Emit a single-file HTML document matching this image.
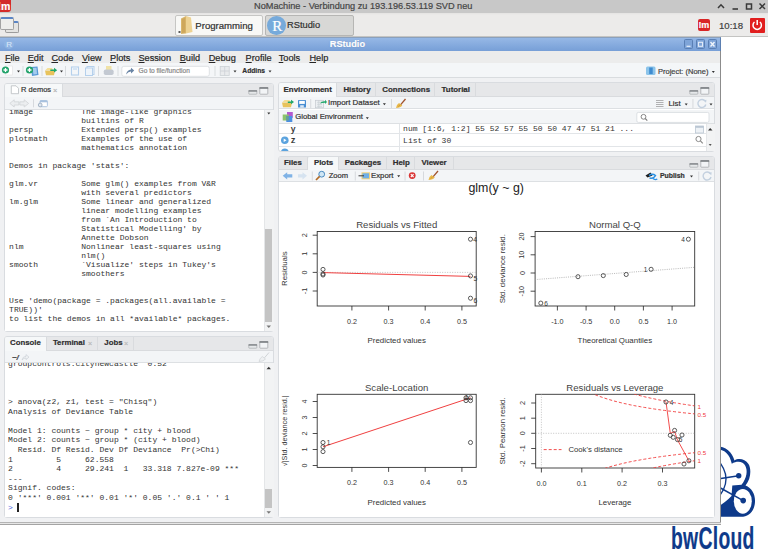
<!DOCTYPE html>
<html><head><meta charset="utf-8">
<style>
*{margin:0;padding:0;box-sizing:border-box}
html,body{width:768px;height:556px;overflow:hidden;background:#fff;font-family:"Liberation Sans",sans-serif}
body{position:relative}
div,svg{position:absolute}
.t{white-space:nowrap;line-height:1;-webkit-text-stroke:0.2px currentColor}
pre{position:absolute;font-family:"Liberation Mono",monospace;white-space:pre;color:#333}
</style></head><body>
<div style="left:0px;top:0px;width:768px;height:13.4px;background:#c8c8c8;"></div>
<div style="left:-3px;top:-1px;width:14px;height:13px;background:#d32a2a;border-radius:0 0 3px 0"></div>
<div class="t" style="left:-2.50px;top:1.18px;font-size:10.5px;color:#fff;font-weight:bold;font-family:'Liberation Sans',sans-serif;">!m</div>
<div class="t" style="left:254.00px;top:1.68px;font-size:9.2px;color:#454545;font-weight:normal;font-family:'Liberation Sans',sans-serif;">NoMachine - Verbindung zu 193.196.53.119 SVD neu</div>
<svg style="left:716px;top:0px;" width="52" height="13" viewBox="716 0 52 13"><path d="M718 8 L721 4.8 L724 8" fill="none" stroke="#3a3a3a" stroke-width="1.5"/>
<path d="M732.5 9 H738" stroke="#3a3a3a" stroke-width="1.6"/>
<rect x="746.5" y="4" width="5" height="5" fill="none" stroke="#3a3a3a" stroke-width="1.5"/>
<path d="M759.5 3.5 L765 9 M765 3.5 L759.5 9" stroke="#3a3a3a" stroke-width="1.5"/></svg>
<div style="left:0px;top:13.4px;width:768px;height:23.6px;background:linear-gradient(#e4e3e2,#ecebea 2px,#ecebea);"></div>
<div style="left:0px;top:36px;width:768px;height:1px;background:#c4c4c2;"></div>
<div style="left:4.5px;top:21px;width:14px;height:12px;background:#e4e4e2;border:1px solid #9c9c9c;border-top:2.5px solid #5a85c5;border-radius:2px"></div>
<div style="left:0px;top:17px;width:14px;height:13px;background:#ededeb;border:1px solid #a2a2a2;border-top:2.5px solid #5a85c5;border-radius:2px"></div>
<div style="left:174.5px;top:14.8px;width:88px;height:20.8px;background:#f8f8f6;border:1px solid #c6c6c4;border-radius:2px"></div>
<svg style="left:176px;top:15px;" width="20" height="20" viewBox="176 15 20 20"><path d="M181 18.5 L186 16 L186 33.5 L181 34 Z" fill="#d9b66c"/>
<path d="M186 16 L191 17.5 L192.5 32 L186 33.5 Z" fill="#edd293"/>
<path d="M182 19 L185.2 17.8 L185.2 32.5 L182 33Z" fill="#c49a4e" opacity=".55"/>
<rect x="178.5" y="31" width="2" height="2" fill="#5a5a5a"/></svg>
<div class="t" style="left:195.30px;top:20.84px;font-size:9.6px;color:#303030;font-weight:normal;font-family:'Liberation Sans',sans-serif;">Programming</div>
<div style="left:265.2px;top:14.8px;width:88.5px;height:20.8px;background:#d8d8d6;border:1px solid #b6b6b4;border-radius:2px"></div>
<div style="left:266.9px;top:16.4px;width:18.7px;height:18.7px;border-radius:50%;background:#76aadb"></div>
<div class="t" style="left:272.20px;top:18.75px;font-size:15px;color:#ffffff;font-weight:normal;font-family:'Liberation Serif',serif;">R</div>
<div class="t" style="left:287.00px;top:21.09px;font-size:9.3px;color:#303030;font-weight:normal;font-family:'Liberation Sans',sans-serif;">RStudio</div>
<div style="left:698px;top:19px;width:12px;height:12px;background:#d92626;border-radius:2px"></div>
<div class="t" style="left:698.60px;top:21.25px;font-size:9px;color:#fff;font-weight:bold;font-family:'Liberation Sans',sans-serif;letter-spacing:-0.3px">!m</div>
<div class="t" style="left:719.00px;top:21.14px;font-size:9.6px;color:#404040;font-weight:normal;font-family:'Liberation Sans',sans-serif;">10:18</div>
<div style="left:749.5px;top:17.5px;width:15.5px;height:15px;background:#e11e1e;border-radius:1px"></div>
<svg style="left:749px;top:17px;" width="17" height="16" viewBox="749 17 17 16"><path d="M754.5 22 A4.2 4.2 0 1 0 759.9 22" fill="none" stroke="#fff" stroke-width="1.5"/>
<path d="M757.2 20 V25" stroke="#fff" stroke-width="1.5"/></svg>
<svg style="left:700px;top:440px;" width="68" height="80" viewBox="700 440 68 80">
<path d="M716 446.3 C726 446.5 732 452 734.5 460.5 C738 458 745 458.5 748.5 464 C751.5 469 751 479 745.5 485.5 C752 488 755.5 495 755 502 C754.5 511 749 516.8 741 516.8 L716 516.8 Z" fill="#0e3a8a"/>
<path d="M716 449.3 C725 449.5 729.5 454 731.8 463.7 C737 460.8 743 461.2 745.3 465.8 C747.8 470.5 747 478 741.5 484.8 L732.3 485.5 L731.5 496 Q726 502 716 508 Z" fill="#fff"/>
<ellipse cx="742.8" cy="501.3" rx="9" ry="12.4" fill="#fff"/>
<path d="M716 458 Q736 479 716 500" fill="none" stroke="#0e3a8a" stroke-width="1.3"/>
<path d="M716 479.3 L738.7 475.8 M716 485.5 L743.2 500.6" stroke="#0e3a8a" stroke-width="1.5"/>
<circle cx="738.7" cy="475.8" r="2.7" fill="#0e3a8a"/><circle cx="743.2" cy="500.6" r="2.8" fill="#0e3a8a"/>
</svg>
<div class="t" style="left:671.30px;top:523.92px;font-size:30.8px;color:#0e3a8a;font-weight:bold;font-family:'Liberation Sans',sans-serif;transform:scaleX(0.627);transform-origin:0 0;letter-spacing:0.5px">bwCloud</div>
<div style="left:0px;top:37px;width:721px;height:488px;background:#f0f1f3;border-right:1px solid #8c8c8c"></div>
<div style="left:0px;top:37px;width:721px;height:14px;background:linear-gradient(#96b8e6,#779fd7);border-top:1px solid #8aa0bd;border-right:1px solid #5b7fb1"></div>
<div style="left:3.5px;top:39px;width:10px;height:10px;border-radius:50%;background:#8fb3e2"></div>
<div class="t" style="left:6.30px;top:41.30px;font-size:8px;color:#d5e4f7;font-weight:normal;font-family:'Liberation Sans',sans-serif;">R</div>
<div class="t" style="left:329.80px;top:39.88px;font-size:9.2px;color:#ffffff;font-weight:bold;font-family:'Liberation Sans',sans-serif;text-shadow:0 0 1px rgba(60,90,140,.5)">RStudio</div>
<div style="left:683.5px;top:39.4px;width:9.8px;height:9.4px;background:#7ea4d8;border:1px solid #5a7fb4;border-radius:1.5px"></div>
<div style="left:695.6px;top:39.4px;width:9.8px;height:9.4px;background:#7ea4d8;border:1px solid #5a7fb4;border-radius:1.5px"></div>
<div style="left:707.6px;top:39.4px;width:9.8px;height:9.4px;background:#7ea4d8;border:1px solid #5a7fb4;border-radius:1.5px"></div>
<svg style="left:683px;top:39px;" width="36" height="11" viewBox="683 39 36 11"><path d="M686.5 46.3 H690.5" stroke="#e2ebf7" stroke-width="1.3"/>
<rect x="698.5" y="42.3" width="4" height="4" fill="none" stroke="#e2ebf7" stroke-width="1.1"/>
<path d="M710.5 42 L714.5 46.5 M714.5 42 L710.5 46.5" stroke="#f0f5fb" stroke-width="1.4"/></svg>
<div style="left:0px;top:51px;width:720px;height:12px;background:#ececec;"></div>
<div class="t" style="left:4.90px;top:53.58px;font-size:9.2px;color:#262626;font-weight:normal;font-family:'Liberation Sans',sans-serif;"><span style="text-decoration:underline;text-underline-offset:1.3px">F</span>ile</div>
<div class="t" style="left:27.70px;top:53.58px;font-size:9.2px;color:#262626;font-weight:normal;font-family:'Liberation Sans',sans-serif;"><span style="text-decoration:underline;text-underline-offset:1.3px">E</span>dit</div>
<div class="t" style="left:51.40px;top:53.58px;font-size:9.2px;color:#262626;font-weight:normal;font-family:'Liberation Sans',sans-serif;"><span style="text-decoration:underline;text-underline-offset:1.3px">C</span>ode</div>
<div class="t" style="left:81.90px;top:53.58px;font-size:9.2px;color:#262626;font-weight:normal;font-family:'Liberation Sans',sans-serif;"><span style="text-decoration:underline;text-underline-offset:1.3px">V</span>iew</div>
<div class="t" style="left:110.00px;top:53.58px;font-size:9.2px;color:#262626;font-weight:normal;font-family:'Liberation Sans',sans-serif;"><span style="text-decoration:underline;text-underline-offset:1.3px">P</span>lots</div>
<div class="t" style="left:138.40px;top:53.58px;font-size:9.2px;color:#262626;font-weight:normal;font-family:'Liberation Sans',sans-serif;"><span style="text-decoration:underline;text-underline-offset:1.3px">S</span>ession</div>
<div class="t" style="left:179.70px;top:53.58px;font-size:9.2px;color:#262626;font-weight:normal;font-family:'Liberation Sans',sans-serif;"><span style="text-decoration:underline;text-underline-offset:1.3px">B</span>uild</div>
<div class="t" style="left:208.70px;top:53.58px;font-size:9.2px;color:#262626;font-weight:normal;font-family:'Liberation Sans',sans-serif;"><span style="text-decoration:underline;text-underline-offset:1.3px">D</span>ebug</div>
<div class="t" style="left:245.60px;top:53.58px;font-size:9.2px;color:#262626;font-weight:normal;font-family:'Liberation Sans',sans-serif;"><span style="text-decoration:underline;text-underline-offset:1.3px">P</span>rofile</div>
<div class="t" style="left:278.70px;top:53.58px;font-size:9.2px;color:#262626;font-weight:normal;font-family:'Liberation Sans',sans-serif;"><span style="text-decoration:underline;text-underline-offset:1.3px">T</span>ools</div>
<div class="t" style="left:309.40px;top:53.58px;font-size:9.2px;color:#262626;font-weight:normal;font-family:'Liberation Sans',sans-serif;"><span style="text-decoration:underline;text-underline-offset:1.3px">H</span>elp</div>
<div style="left:0px;top:63px;width:720px;height:15px;background:#f4f6f8;border-bottom:1px solid #d9dcdf"></div>
<svg style="left:0px;top:63px;" width="720" height="15" viewBox="0 63 720 15">
 <rect x="5.5" y="66" width="7" height="9" fill="#fff" stroke="#e2e2e2" stroke-width=".6"/>
 <circle cx="5.5" cy="70" r="3.6" fill="#22a36b"/>
 <path d="M5.5 68 V72 M3.5 70 H7.5" stroke="#fff" stroke-width="1.3"/>
 <path d="M17 70.5 L20 70.5 L18.5 72.5 Z" fill="#333"/>
 <rect x="22.5" y="66" width="1" height="10" fill="#d8dbde"/>
 <path d="M31 67 L37.5 66.5 L38.5 75 L32 76 Z" fill="#5a9ad6"/>
 <path d="M32.5 68 L36.5 67.8 L37 74 L33.5 74.5 Z" fill="#a5cbee"/>
 <circle cx="29.5" cy="70" r="3.6" fill="#22a36b"/>
 <path d="M29.5 68 V72 M27.5 70 H31.5" stroke="#fff" stroke-width="1.3"/>
 <rect x="41.5" y="66" width="1" height="10" fill="#d8dbde"/>
 <path d="M45.5 70 L47.5 68 L52 68 L53 70 Z" fill="#f3de95"/>
 <path d="M45 70.5 H55 L54 75.3 H46 Z" fill="#e8c35c"/>
 <path d="M50.3 69.6 L54 69.6 L54 67.8 L57.2 70.2 L54 72.5 L54 71 L50.3 71Z" fill="#22a86b"/>
 <path d="M60 70.5 L63 70.5 L61.5 72.5 Z" fill="#333"/>
 <rect x="65" y="66" width="1" height="10" fill="#d8dbde"/>
 <rect x="71.5" y="67" width="7" height="8" fill="none" stroke="#b5d0ec" stroke-width="1.1"/>
 <rect x="73" y="67" width="4" height="3" fill="#d5e5f5"/>
 <rect x="87" y="66.5" width="7" height="8" fill="none" stroke="#b5d0ec" stroke-width="1"/>
 <rect x="85.5" y="68" width="7" height="7.5" fill="#eef4fa" stroke="#b5d0ec" stroke-width="1"/>
 <rect x="98" y="66" width="1" height="10" fill="#d8dbde"/>
 <rect x="106" y="66" width="5.5" height="4" fill="#f0e2a6"/>
 <rect x="103.8" y="69.5" width="9.8" height="5.5" rx="1.8" fill="#c3c9d2"/>
 <rect x="117.5" y="66" width="1" height="10" fill="#d8dbde"/>
 <rect x="121.8" y="66.3" width="87.5" height="10" rx="2" fill="#fff" stroke="#dee1e4" stroke-width="1"/>
 <path d="M126 74.5 Q127 70 131 69.5 L131 67.8 L134.2 70.6 L131 73.4 L131 71.6 Q128.3 71.6 126 74.5Z" fill="#6a85a5"/>
 <rect x="214.5" y="66" width="1" height="10" fill="#d8dbde"/>
 <rect x="220.2" y="66.5" width="9" height="9" fill="#e9ebed" stroke="#cdd1d5" stroke-width=".8"/>
 <path d="M224.7 66.5 V75.5 M220.2 71 H229.2" stroke="#cdd1d5" stroke-width=".8"/>
 <path d="M233.5 70.5 L236.5 70.5 L235 72.5 Z" fill="#333"/>
 <path d="M268.5 70.5 L271.5 70.5 L270 72.5 Z" fill="#333"/>
 <rect x="646" y="66.5" width="9.5" height="8.5" rx="1.5" fill="#8cc4ea"/>
 <rect x="649.2" y="67.5" width="3.5" height="6.5" fill="#3d8bd0"/>
 <path d="M711.8 71 L714.8 71 L713.3 73 Z" fill="#333"/></svg>
<div class="t" style="left:138.50px;top:68.49px;font-size:6.6px;color:#8a8a8a;font-weight:normal;font-family:'Liberation Sans',sans-serif;">Go to file/function</div>
<div class="t" style="left:242.30px;top:68.41px;font-size:6.7px;color:#303030;font-weight:bold;font-family:'Liberation Sans',sans-serif;">Addins</div>
<div class="t" style="left:658.00px;top:67.52px;font-size:7.5px;color:#444;font-weight:normal;font-family:'Liberation Sans',sans-serif;">Project: (None)</div>
<div style="left:4px;top:82.5px;width:270px;height:249.5px;background:#fff;border:1px solid #d9dce0;border-radius:3px"></div>
<div style="left:5px;top:83.5px;width:268px;height:13.5px;background:#e6e7e9;border-bottom:1px solid #d9dbde;border-radius:2px 2px 0 0"></div>
<div style="left:5px;top:83.5px;width:58px;height:13.5px;background:#f6f8f9;border-right:1px solid #d9dbde;border-radius:2px 0 0 0"></div>
<svg style="left:9px;top:84px;" width="12" height="12" viewBox="9 84 12 12"><path d="M11.3 85.8 H16 L18.5 88.3 V93.7 H11.3Z" fill="#fff" stroke="#b8bbbf" stroke-width=".8"/></svg>
<div class="t" style="left:21.10px;top:85.82px;font-size:7.5px;color:#333;font-weight:normal;font-family:'Liberation Sans',sans-serif;">R demos</div>
<div class="t" style="left:53.00px;top:86.52px;font-size:7.5px;color:#b3b3b3;font-weight:normal;font-family:'Liberation Sans',sans-serif;">×</div>
<svg style="left:247.5px;top:87px;" width="21" height="9" viewBox="247.5 87 21 9"><rect x="248.3" y="90.8" width="8" height="3.4" rx=".6" fill="#e6e8ea" stroke="#9da1a5" stroke-width=".6"/>
<rect x="248.0" y="90.3" width="8.6" height="1.3" fill="#7a7e82"/>
<rect x="259.3" y="87.6" width="8" height="6.6" rx=".6" fill="#f2f4f6" stroke="#9da1a5" stroke-width=".7"/>
<rect x="258.9" y="87.2" width="8.8" height="1.6" fill="#7a7e82"/></svg>
<div style="left:5px;top:96.7px;width:268px;height:13.5px;background:#f3f5f7;border-bottom:1px solid #dde0e3"></div>
<svg style="left:5px;top:98px;" width="46" height="10" viewBox="5 98 46 10"><path d="M9.8 103.4 L14.2 99.8 V101.8 H18.8 V105 H14.2 V107Z" fill="#eceef0" stroke="#d0d3d6" stroke-width=".8"/>
<path d="M28.6 103.4 L24.2 99.8 V101.8 H19.8 V105 H24.2 V107Z" fill="#eceef0" stroke="#d0d3d6" stroke-width=".8"/>
<rect x="33" y="99.3" width=".9" height="8" fill="#d3d6da"/>
<rect x="40" y="100.5" width="7.4" height="6.2" rx="1" fill="#fff" stroke="#a8c1de" stroke-width=".9"/>
<rect x="40" y="100.5" width="7.4" height="1.8" fill="#a8c1de"/>
<circle cx="40.2" cy="105" r="1.9" fill="#dfe6ee" stroke="#8a9db3" stroke-width=".7"/></svg>
<div style="left:5px;top:110.2px;width:259px;height:221px;overflow:hidden;background:#fff">
<pre style="left:4.1px;top:-3.6px;font-size:8.03px;line-height:9.03px">image          The image-like graphics
               builtins of R
persp          Extended persp() examples
plotmath       Examples of the use of
               mathematics annotation

Demos in package 'stats':

glm.vr         Some glm() examples from V&amp;R
               with several predictors
lm.glm         Some linear and generalized
               linear modelling examples
               from `An Introduction to
               Statistical Modelling' by
               Annette Dobson
nlm            Nonlinear least-squares using
               nlm()
smooth         `Visualize' steps in Tukey's
               smoothers


Use 'demo(package = .packages(all.available =
TRUE))'
to list the demos in all *available* packages.</pre></div>
<div style="left:264.1px;top:110.2px;width:9.5px;height:221px;background:#f2f3f4;border-left:1px solid #e4e6e8"></div>
<div style="left:265.3px;top:229px;width:6.4px;height:93px;background:#c4c4c4;"></div>
<svg style="left:264px;top:110px;" width="10" height="7" viewBox="264 110 10 7"><path d="M267.3 112.5 L270.3 112.5 L268.8 114.5Z" fill="#333"/></svg>
<svg style="left:264px;top:318px;" width="10" height="12" viewBox="264 318 10 12"><path d="M266.5 325.5 L271 325.5 L268.8 328Z" fill="#777"/></svg>
<div style="left:4px;top:336.4px;width:270px;height:181.60000000000002px;background:#fff;border:1px solid #d9dce0;border-radius:3px"></div>
<div style="left:5px;top:337.4px;width:268px;height:13.200000000000045px;background:#e6e7e9;border-bottom:1px solid #d9dbde;border-radius:2px 2px 0 0"></div>
<div style="left:5px;top:337.4px;width:41.5px;height:13.200000000000045px;background:#f6f8f9;border-right:1px solid #d9dbde;border-radius:2px 0 0 0"></div>
<div style="left:46.5px;top:337.4px;width:51.900000000000006px;height:12.200000000000045px;background:#e6e7e9;border-right:1px solid #d9dbde;border-radius:2px 0 0 0"></div>
<div style="left:98.4px;top:337.4px;width:35.599999999999994px;height:12.200000000000045px;background:#e6e7e9;border-right:1px solid #d9dbde;border-radius:2px 0 0 0"></div>
<div class="t" style="left:10.00px;top:339.37px;font-size:7.8px;color:#2e2e2e;font-weight:bold;font-family:'Liberation Sans',sans-serif;">Console</div>
<div class="t" style="left:52.90px;top:339.37px;font-size:7.8px;color:#2e2e2e;font-weight:bold;font-family:'Liberation Sans',sans-serif;">Terminal</div>
<div class="t" style="left:88.00px;top:340.20px;font-size:7.3px;color:#b8b8b8;font-weight:normal;font-family:'Liberation Sans',sans-serif;">×</div>
<div class="t" style="left:104.30px;top:339.37px;font-size:7.8px;color:#2e2e2e;font-weight:bold;font-family:'Liberation Sans',sans-serif;">Jobs</div>
<div class="t" style="left:124.00px;top:340.20px;font-size:7.3px;color:#b8b8b8;font-weight:normal;font-family:'Liberation Sans',sans-serif;">×</div>
<svg style="left:247.5px;top:340.5px;" width="21" height="9" viewBox="247.5 340.5 21 9"><rect x="248.3" y="344.3" width="8" height="3.4" rx=".6" fill="#e6e8ea" stroke="#9da1a5" stroke-width=".6"/>
<rect x="248.0" y="343.8" width="8.6" height="1.3" fill="#7a7e82"/>
<rect x="259.3" y="341.1" width="8" height="6.6" rx=".6" fill="#f2f4f6" stroke="#9da1a5" stroke-width=".7"/>
<rect x="258.9" y="340.7" width="8.8" height="1.6" fill="#7a7e82"/></svg>
<div style="left:5px;top:350.6px;width:268px;height:12.199999999999989px;background:#f3f5f7;border-bottom:1px solid #dde0e3"></div>
<div class="t" style="left:12.00px;top:353.77px;font-size:7.8px;color:#444;font-weight:bold;font-family:'Liberation Sans',sans-serif;font-style:italic">~/</div>
<svg style="left:21px;top:352px;" width="9" height="9" viewBox="21 352 9 9"><path d="M22 360 Q22.6 356.5 26 356.3 V354.6 L29 357.1 L26 359.6 V358 Q23.6 358 22 360Z" fill="#f0f2f4" stroke="#cbd1d7" stroke-width=".7"/></svg>
<svg style="left:256px;top:352px;" width="14" height="11" viewBox="256 352 14 11"><path d="M269 352.5 L264.5 357.8" stroke="#cfd3d6" stroke-width="1"/><path d="M259 361.5 Q259.8 358 262.3 356.5 L265.5 359 Q263.5 361.5 259 361.5Z" fill="#eef0f2" stroke="#cfd3d6" stroke-width=".7"/></svg>
<div style="left:5px;top:363.3px;width:259px;height:154px;overflow:hidden;background:#fff">
<pre style="left:3.1px;top:-4.6px;font-size:8.03px;line-height:9.6px">groupcontrols:citynewcastle  0.52



&gt; anova(z2, z1, test = "Chisq")
Analysis of Deviance Table

Model 1: counts ~ group * city + blood
Model 2: counts ~ group * (city + blood)
  Resid. Df Resid. Dev Df Deviance  Pr(&gt;Chi)
1         5     62.558
2         4     29.241  1   33.318 7.827e-09 ***
---
Signif. codes:
0 '***' 0.001 '**' 0.01 '*' 0.05 '.' 0.1 ' ' 1
<span style="color:#4b5fe0">&gt;</span></pre>
<div style="left:12.4px;top:139.7px;width:1.5px;height:9.5px;background:#222"></div></div>
<div style="left:264.1px;top:362.8px;width:9.5px;height:154.5px;background:#f2f3f4;border-left:1px solid #e4e6e8"></div>
<div style="left:265.3px;top:489px;width:6.4px;height:19.2px;background:#c4c4c4;"></div>
<svg style="left:264px;top:364px;" width="10" height="8" viewBox="264 364 10 8"><path d="M266.5 369.3 L271 369.3 L268.8 366.8Z" fill="#333"/></svg>
<svg style="left:264px;top:509px;" width="10" height="8" viewBox="264 509 10 8"><path d="M266.5 511.2 L271 511.2 L268.8 513.7Z" fill="#777"/></svg>
<div style="left:277.5px;top:82.1px;width:437.1px;height:69.5px;background:#fff;border:1px solid #d9dce0;border-radius:3px"></div>
<div style="left:278.5px;top:83.1px;width:435.1px;height:13.600000000000009px;background:#e6e7e9;border-bottom:1px solid #d9dbde;border-radius:2px 2px 0 0"></div>
<div style="left:278.5px;top:83.1px;width:58.69999999999999px;height:13.600000000000009px;background:#f6f8f9;border-right:1px solid #d9dbde;border-radius:2px 0 0 0"></div>
<div style="left:337.2px;top:83.1px;width:39.10000000000002px;height:12.600000000000009px;background:#e6e7e9;border-right:1px solid #d9dbde;border-radius:2px 0 0 0"></div>
<div style="left:376.3px;top:83.1px;width:58.39999999999998px;height:12.600000000000009px;background:#e6e7e9;border-right:1px solid #d9dbde;border-radius:2px 0 0 0"></div>
<div style="left:434.7px;top:83.1px;width:41.30000000000001px;height:12.600000000000009px;background:#e6e7e9;border-right:1px solid #d9dbde;border-radius:2px 0 0 0"></div>
<div class="t" style="left:283.60px;top:85.78px;font-size:7.9px;color:#2e2e2e;font-weight:bold;font-family:'Liberation Sans',sans-serif;">Environment</div>
<div class="t" style="left:343.40px;top:85.78px;font-size:7.9px;color:#2e2e2e;font-weight:bold;font-family:'Liberation Sans',sans-serif;">History</div>
<div class="t" style="left:382.30px;top:85.78px;font-size:7.9px;color:#2e2e2e;font-weight:bold;font-family:'Liberation Sans',sans-serif;">Connections</div>
<div class="t" style="left:441.60px;top:85.78px;font-size:7.9px;color:#2e2e2e;font-weight:bold;font-family:'Liberation Sans',sans-serif;">Tutorial</div>
<svg style="left:689px;top:87px;" width="21" height="9" viewBox="689 87 21 9"><rect x="689.8" y="90.8" width="8" height="3.4" rx=".6" fill="#e6e8ea" stroke="#9da1a5" stroke-width=".6"/>
<rect x="689.5" y="90.3" width="8.6" height="1.3" fill="#7a7e82"/>
<rect x="700.8" y="87.6" width="8" height="6.6" rx=".6" fill="#f2f4f6" stroke="#9da1a5" stroke-width=".7"/>
<rect x="700.4" y="87.2" width="8.8" height="1.6" fill="#7a7e82"/></svg>
<div style="left:278.5px;top:96.7px;width:435.1px;height:12.799999999999997px;background:#f3f5f7;border-bottom:1px solid #dde0e3"></div>
<div style="left:278.5px;top:109.5px;width:435.1px;height:14.799999999999997px;background:#f3f5f7;border-bottom:1px solid #dde0e3"></div>
<div style="left:278.5px;top:124.3px;width:428px;height:9.9px;background:#fff;border-bottom:1px solid #e2e5e8"></div>
<div style="left:278.5px;top:134.2px;width:428px;height:13.1px;background:#fff;border-bottom:1px solid #e2e5e8"></div>
<div style="left:399.4px;top:124.3px;width:1px;height:26.5px;background:#e2e5e8;"></div>
<svg style="left:277px;top:96px;" width="438" height="56" viewBox="277 96 438 56">
 <path d="M282.5 102 L284.5 100 L289.5 100 L290.5 102 Z" fill="#f3de95"/><path d="M282 102.5 H292 L291 107.3 H283 Z" fill="#e8c35c"/><path d="M287.8 101.6 L291 101.6 L291 99.8 L294 102 L291 104.2 L291 103 L287.8 103Z" fill="#22a86b"/>
 <rect x="298" y="100" width="8" height="7.6" rx=".6" fill="#4a8fd3"/><rect x="299.2" y="100.9" width="5.6" height="3" fill="#fff"/><rect x="300.2" y="105.2" width="3.6" height="2.4" fill="#dbe8f5"/>
 <rect x="310.3" y="99" width=".9" height="9" fill="#d3d6da"/>
 <rect x="315.5" y="100.3" width="8" height="7.5" fill="#edf0f3" stroke="#c3c9cf" stroke-width=".7"/><path d="M317 102.3 H322 M317 104.3 H322 M317 106.3 H322 M318.8 100.3 V107.8" stroke="#c3c9cf" stroke-width=".6"/><path d="M320 103.5 Q321 101 325 101.2 V99.8 L327 101.9 L325 104 V102.8 Q322 102.8 320 103.5Z" fill="#22a86b"/>
 <rect x="391" y="99" width=".9" height="9" fill="#d3d6da"/>
 <path d="M405.5 99 L400.5 104.8" stroke="#a0522d" stroke-width="1.3"/><path d="M396 108 Q396.5 104.5 399 103 L402.3 105.6 Q400.5 108 396 108Z" fill="#e8b84a"/><path d="M398.2 106.8 L400.2 104.6" stroke="#c48a2a" stroke-width=".6"/>
 <rect x="287" y="112" width="5.8" height="5.8" fill="#b259cf"/><rect x="282.7" y="114.5" width="6" height="6" fill="#8cc36c"/><rect x="286.3" y="116" width="6" height="6" fill="#4a8fe2"/><rect x="286.3" y="116" width="2.4" height="4.5" fill="#6aa090"/>
 <path d="M656 100.5 H663.5 M656 102.5 H663.5 M656 104.5 H663.5 M656 106.5 H663.5" stroke="#a0a0a0" stroke-width=".8"/>
 <rect x="692.5" y="99" width=".9" height="9" fill="#d3d6da"/>
 <path d="M705.2 101.2 A4 4 0 1 0 705.8 104.5" fill="none" stroke="#c3d0df" stroke-width="1.4"/><path d="M703.5 100.3 L706.5 99.8 L706 102.8Z" fill="#c3d0df"/>
 <rect x="636.8" y="112.4" width="72.2" height="10" rx="1.5" fill="#fff" stroke="#dce0e4" stroke-width="1"/>
 <circle cx="643.5" cy="116.8" r="2.4" fill="none" stroke="#7a7a7a" stroke-width=".9"/><path d="M645.2 118.5 L647.3 120.6" stroke="#7a7a7a" stroke-width="1.1"/>
 <circle cx="284.8" cy="140.3" r="3.8" fill="#5ba3de"/><path d="M283.7 138.5 L286.5 140.3 L283.7 142.1Z" fill="#fff"/>
 <rect x="695.5" y="126" width="8" height="7" fill="#eef2f6" stroke="#bac6d3" stroke-width=".8"/><rect x="695.5" y="126" width="8" height="1.8" fill="#bac6d3"/>
 <circle cx="698.5" cy="139" r="2.6" fill="none" stroke="#8a8a8a" stroke-width="1"/><path d="M700.4 140.9 L702.8 143.3" stroke="#8a8a8a" stroke-width="1.2"/>
</svg>
<svg style="left:280px;top:147px;" width="10" height="3.8" viewBox="280 147 10 3.8"><circle cx="284.8" cy="152.2" r="3.8" fill="#5ba3de"/></svg>
<div style="left:706px;top:124.3px;width:8.6px;height:26.5px;background:#f2f3f4;border-left:1px solid #e4e6e8"></div>
<svg style="left:706px;top:124px;" width="9" height="27" viewBox="706 124 9 27"><path d="M708 130.5 L712.5 130.5 L710.2 128Z" fill="#333"/><path d="M708.7 144 L711.7 144 L710.2 146Z" fill="#555"/></svg>
<div class="t" style="left:328.00px;top:99.38px;font-size:7.9px;color:#333;font-weight:normal;font-family:'Liberation Sans',sans-serif;">Import Dataset</div>
<svg style="left:380px;top:100px" width="10" height="8" viewBox="380 100 10 8"><path d="M382.9 103.2 L385.9 103.2 L384.4 105.2Z" fill="#333"/></svg>
<div class="t" style="left:295.30px;top:112.85px;font-size:7.7px;color:#333;font-weight:normal;font-family:'Liberation Sans',sans-serif;">Global Environment</div>
<svg style="left:362px;top:114px" width="10" height="8" viewBox="362 114 10 8"><path d="M365.8 117.3 L368.8 117.3 L367.3 119.3Z" fill="#333"/></svg>
<div class="t" style="left:668.50px;top:99.57px;font-size:7.8px;color:#333;font-weight:normal;font-family:'Liberation Sans',sans-serif;">List</div>
<svg style="left:680px;top:100px" width="36" height="8" viewBox="680 100 36 8"><path d="M684.7 103.5 L687.7 103.5 L686.2 105.5Z" fill="#333"/><path d="M709.5 103.5 L712.5 103.5 L711 105.5Z" fill="#333"/></svg>
<div class="t" style="left:291.00px;top:125.29px;font-size:8.6px;color:#222;font-weight:normal;font-family:'Liberation Sans',sans-serif;">y</div>
<div class="t" style="left:291.00px;top:136.49px;font-size:8.6px;color:#222;font-weight:normal;font-family:'Liberation Sans',sans-serif;">z</div>
<div style="left:400.5px;top:124.3px;width:305px;height:26.5px;overflow:hidden">
<pre style="left:2.6px;top:-1.2px;font-size:8.03px;line-height:12.2px">num [1:6, 1:2] 55 52 57 55 50 50 47 47 51 21 ...
List of 30</pre></div>
<div style="left:277.5px;top:155.5px;width:437.1px;height:362.5px;background:#fff;border:1px solid #d9dce0;border-radius:3px"></div>
<div style="left:278.5px;top:156.5px;width:435.1px;height:13.099999999999994px;background:#e6e7e9;border-bottom:1px solid #d9dbde;border-radius:2px 2px 0 0"></div>
<div style="left:278.5px;top:156.5px;width:29.80000000000001px;height:12.099999999999994px;background:#e6e7e9;border-right:1px solid #d9dbde;border-radius:2px 0 0 0"></div>
<div style="left:308.3px;top:156.5px;width:30.5px;height:13.099999999999994px;background:#f6f8f9;border-right:1px solid #d9dbde;border-radius:2px 0 0 0"></div>
<div style="left:338.8px;top:156.5px;width:47.89999999999998px;height:12.099999999999994px;background:#e6e7e9;border-right:1px solid #d9dbde;border-radius:2px 0 0 0"></div>
<div style="left:386.7px;top:156.5px;width:28.69999999999999px;height:12.099999999999994px;background:#e6e7e9;border-right:1px solid #d9dbde;border-radius:2px 0 0 0"></div>
<div style="left:415.4px;top:156.5px;width:38.400000000000034px;height:12.099999999999994px;background:#e6e7e9;border-right:1px solid #d9dbde;border-radius:2px 0 0 0"></div>
<div class="t" style="left:283.90px;top:159.19px;font-size:7.9px;color:#2e2e2e;font-weight:bold;font-family:'Liberation Sans',sans-serif;">Files</div>
<div class="t" style="left:313.90px;top:159.19px;font-size:7.9px;color:#2e2e2e;font-weight:bold;font-family:'Liberation Sans',sans-serif;">Plots</div>
<div class="t" style="left:344.80px;top:159.19px;font-size:7.9px;color:#2e2e2e;font-weight:bold;font-family:'Liberation Sans',sans-serif;">Packages</div>
<div class="t" style="left:392.70px;top:159.19px;font-size:7.9px;color:#2e2e2e;font-weight:bold;font-family:'Liberation Sans',sans-serif;">Help</div>
<div class="t" style="left:421.40px;top:159.19px;font-size:7.9px;color:#2e2e2e;font-weight:bold;font-family:'Liberation Sans',sans-serif;">Viewer</div>
<svg style="left:689px;top:160px;" width="21" height="9" viewBox="689 160 21 9"><rect x="689.8" y="163.8" width="8" height="3.4" rx=".6" fill="#e6e8ea" stroke="#9da1a5" stroke-width=".6"/>
<rect x="689.5" y="163.3" width="8.6" height="1.3" fill="#7a7e82"/>
<rect x="700.8" y="160.6" width="8" height="6.6" rx=".6" fill="#f2f4f6" stroke="#9da1a5" stroke-width=".7"/>
<rect x="700.4" y="160.2" width="8.8" height="1.6" fill="#7a7e82"/></svg>
<div style="left:278.5px;top:169.6px;width:435.1px;height:12.700000000000017px;background:#f3f5f7;border-bottom:1px solid #dde0e3"></div>
<svg style="left:277px;top:169px;" width="438" height="14" viewBox="277 169 438 14">
 <path d="M282.7 175.8 L287.2 172.2 V174.2 H292.3 V177.4 H287.2 V179.4Z" fill="#80b3e6"/>
 <path d="M307 175.8 L302.5 172.2 V174.2 H298 V177.4 H302.5 V179.4Z" fill="#d6e3f0"/>
 <rect x="311.8" y="171.5" width=".9" height="9" fill="#d3d6da"/>
 <circle cx="321.7" cy="174.2" r="2.9" fill="#cfe6f5" stroke="#4b8bc0" stroke-width="1"/><path d="M319.6 176.4 L316 180" stroke="#b06a26" stroke-width="1.7"/>
 <rect x="354.8" y="171.5" width=".9" height="9" fill="#d3d6da"/>
 <rect x="361.5" y="172.3" width="8.5" height="7" fill="#efd27c"/><rect x="362.5" y="173.3" width="6.5" height="5" fill="#70b0e6"/><path d="M358.5 175.8 H364" stroke="#3a3a3a" stroke-width="1"/>
 <rect x="404.6" y="171.5" width=".9" height="9" fill="#d3d6da"/>
 <circle cx="412.2" cy="175.6" r="3.4" fill="#d93636"/><path d="M410.8 174.2 L413.6 177 M413.6 174.2 L410.8 177" stroke="#fff" stroke-width="1.1"/>
 <rect x="423" y="171.5" width=".9" height="9" fill="#d3d6da"/>
 <path d="M438 171 L433 176.8" stroke="#a0522d" stroke-width="1.3"/><path d="M428.5 180 Q429 176.5 431.5 175 L434.8 177.6 Q433 180 428.5 180Z" fill="#e8b84a"/><path d="M430.7 178.8 L432.7 176.6" stroke="#c48a2a" stroke-width=".6"/>
 <path d="M645.5 175.5 L650.5 172.5 L652.5 175.5 L647.5 177.5Z" fill="#1e1e1e"/>
 <path d="M649 175.6 Q652.5 173 655.5 175.6 Q653 179.5 649.5 177.8" fill="none" stroke="#2a90e2" stroke-width="1.4"/><path d="M652.5 178.3 Q655 180.5 657.3 179" fill="none" stroke="#2a90e2" stroke-width="1.2"/>
 <rect x="698.3" y="171.5" width=".9" height="9" fill="#d3d6da"/>
 <path d="M710.4 173.7 A4 4 0 1 0 711 177" fill="none" stroke="#c3d0df" stroke-width="1.4"/><path d="M708.7 172.8 L711.7 172.3 L711.2 175.3Z" fill="#c3d0df"/>
<path d="M397.2 175.2 L400.2 175.2 L398.7 177.2Z" fill="#333"/><path d="M690.0 175.5 L693.0 175.5 L691.5 177.5Z" fill="#333"/></svg>
<div class="t" style="left:328.70px;top:172.44px;font-size:7.6px;color:#333;font-weight:normal;font-family:'Liberation Sans',sans-serif;">Zoom</div>
<div class="t" style="left:371.00px;top:172.27px;font-size:7.8px;color:#333;font-weight:normal;font-family:'Liberation Sans',sans-serif;">Export</div>
<div class="t" style="left:659.90px;top:173.03px;font-size:6.9px;color:#333;font-weight:bold;font-family:'Liberation Sans',sans-serif;">Publish</div>
<div style="left:278.5px;top:182.3px;width:435.1px;height:334.7px;background:#fff;"></div>
<svg style="left:278px;top:182px" width="437" height="336" viewBox="278 182 437 336" font-family="Liberation Sans, sans-serif">
<defs><clipPath id="c4"><rect x="535.7" y="394.3" width="159" height="73.7"/></clipPath></defs>
<rect x="317.2" y="231.5" width="159.0" height="74.5" fill="none" stroke="#333" stroke-width="0.9"/>
<text x="396.7" y="227.8" font-size="9.6" text-anchor="middle" fill="#444">Residuals vs Fitted</text>
<line x1="312.7" y1="235.2" x2="317.2" y2="235.2" stroke="#222" stroke-width="0.8"/>
<text x="306.59999999999997" y="235.2" font-size="7.2" text-anchor="middle" fill="#333" transform="rotate(-90 306.59999999999997 235.2)">2</text>
<line x1="312.7" y1="253.8" x2="317.2" y2="253.8" stroke="#222" stroke-width="0.8"/>
<text x="306.59999999999997" y="253.8" font-size="7.2" text-anchor="middle" fill="#333" transform="rotate(-90 306.59999999999997 253.8)">1</text>
<line x1="312.7" y1="272.4" x2="317.2" y2="272.4" stroke="#222" stroke-width="0.8"/>
<text x="306.59999999999997" y="272.4" font-size="7.2" text-anchor="middle" fill="#333" transform="rotate(-90 306.59999999999997 272.4)">0</text>
<line x1="312.7" y1="291.0" x2="317.2" y2="291.0" stroke="#222" stroke-width="0.8"/>
<text x="306.59999999999997" y="291.0" font-size="7.2" text-anchor="middle" fill="#333" transform="rotate(-90 306.59999999999997 291.0)">-1</text>
<line x1="351.9" y1="306" x2="351.9" y2="310.5" stroke="#222" stroke-width="0.8"/>
<text x="351.9" y="323.6" font-size="7.2" text-anchor="middle" fill="#333">0.2</text>
<line x1="388.6" y1="306" x2="388.6" y2="310.5" stroke="#222" stroke-width="0.8"/>
<text x="388.6" y="323.6" font-size="7.2" text-anchor="middle" fill="#333">0.3</text>
<line x1="425.2" y1="306" x2="425.2" y2="310.5" stroke="#222" stroke-width="0.8"/>
<text x="425.2" y="323.6" font-size="7.2" text-anchor="middle" fill="#333">0.4</text>
<line x1="461.9" y1="306" x2="461.9" y2="310.5" stroke="#222" stroke-width="0.8"/>
<text x="461.9" y="323.6" font-size="7.2" text-anchor="middle" fill="#333">0.5</text>
<text x="396.7" y="343.0" font-size="7.9" text-anchor="middle" fill="#333">Predicted values</text>
<text x="287.0" y="268.7" font-size="7.9" text-anchor="middle" fill="#333" transform="rotate(-90 287.0 268.7)">Residuals</text>
<line x1="317.2" y1="272.4" x2="476.2" y2="272.4" stroke="#aaa" stroke-width="0.7" stroke-dasharray="1 1.5"/>
<line x1="323" y1="272.6" x2="470.5" y2="276.4" stroke="#f04040" stroke-width="1.0"/>
<circle cx="323" cy="269.4" r="2.05" fill="none" stroke="#333" stroke-width="0.8"/>
<circle cx="323" cy="274.0" r="2.05" fill="none" stroke="#333" stroke-width="0.8"/>
<circle cx="323" cy="275.0" r="2.05" fill="none" stroke="#333" stroke-width="0.8"/>
<circle cx="470.5" cy="239.2" r="2.05" fill="none" stroke="#333" stroke-width="0.8"/>
<circle cx="470.5" cy="275.9" r="2.05" fill="none" stroke="#333" stroke-width="0.8"/>
<circle cx="470.5" cy="298.2" r="2.05" fill="none" stroke="#333" stroke-width="0.8"/>
<text x="475.2" y="241.6" font-size="6.8" text-anchor="middle" fill="#333">4</text>
<text x="475.5" y="281.0" font-size="6.8" text-anchor="middle" fill="#333">5</text>
<text x="475.5" y="303.3" font-size="6.8" text-anchor="middle" fill="#333">6</text>
<rect x="535.1" y="231.5" width="159.60000000000002" height="74.5" fill="none" stroke="#333" stroke-width="0.9"/>
<text x="614.9" y="227.8" font-size="9.6" text-anchor="middle" fill="#444">Normal Q-Q</text>
<line x1="530.6" y1="236.6" x2="535.1" y2="236.6" stroke="#222" stroke-width="0.8"/>
<text x="524.5" y="236.6" font-size="7.2" text-anchor="middle" fill="#333" transform="rotate(-90 524.5 236.6)">20</text>
<line x1="530.6" y1="254.8" x2="535.1" y2="254.8" stroke="#222" stroke-width="0.8"/>
<text x="524.5" y="254.8" font-size="7.2" text-anchor="middle" fill="#333" transform="rotate(-90 524.5 254.8)">10</text>
<line x1="530.6" y1="273.0" x2="535.1" y2="273.0" stroke="#222" stroke-width="0.8"/>
<text x="524.5" y="273.0" font-size="7.2" text-anchor="middle" fill="#333" transform="rotate(-90 524.5 273.0)">0</text>
<line x1="530.6" y1="291.2" x2="535.1" y2="291.2" stroke="#222" stroke-width="0.8"/>
<text x="524.5" y="291.2" font-size="7.2" text-anchor="middle" fill="#333" transform="rotate(-90 524.5 291.2)">-10</text>
<line x1="557.4" y1="306" x2="557.4" y2="310.5" stroke="#222" stroke-width="0.8"/>
<text x="557.4" y="323.6" font-size="7.2" text-anchor="middle" fill="#333">-1.0</text>
<line x1="586.1" y1="306" x2="586.1" y2="310.5" stroke="#222" stroke-width="0.8"/>
<text x="586.1" y="323.6" font-size="7.2" text-anchor="middle" fill="#333">-0.5</text>
<line x1="614.7" y1="306" x2="614.7" y2="310.5" stroke="#222" stroke-width="0.8"/>
<text x="614.7" y="323.6" font-size="7.2" text-anchor="middle" fill="#333">0.0</text>
<line x1="643.4" y1="306" x2="643.4" y2="310.5" stroke="#222" stroke-width="0.8"/>
<text x="643.4" y="323.6" font-size="7.2" text-anchor="middle" fill="#333">0.5</text>
<line x1="672.1" y1="306" x2="672.1" y2="310.5" stroke="#222" stroke-width="0.8"/>
<text x="672.1" y="323.6" font-size="7.2" text-anchor="middle" fill="#333">1.0</text>
<text x="614.9" y="343.0" font-size="7.9" text-anchor="middle" fill="#333">Theoretical Quantiles</text>
<text x="505.0" y="268.7" font-size="7.9" text-anchor="middle" fill="#333" transform="rotate(-90 505.0 268.7)">Std. deviance resid.</text>
<line x1="535.1" y1="279.6" x2="694.7" y2="267.3" stroke="#999" stroke-width="0.7" stroke-dasharray="1 1.2"/>
<circle cx="540.8" cy="303.1" r="2.05" fill="none" stroke="#333" stroke-width="0.8"/>
<circle cx="578" cy="276.7" r="2.05" fill="none" stroke="#333" stroke-width="0.8"/>
<circle cx="603.3" cy="275.6" r="2.05" fill="none" stroke="#333" stroke-width="0.8"/>
<circle cx="626.2" cy="274.5" r="2.05" fill="none" stroke="#333" stroke-width="0.8"/>
<circle cx="651.1" cy="269.3" r="2.05" fill="none" stroke="#333" stroke-width="0.8"/>
<circle cx="688.4" cy="239.2" r="2.05" fill="none" stroke="#333" stroke-width="0.8"/>
<text x="546.0" y="305.6" font-size="6.5" text-anchor="middle" fill="#333">6</text>
<text x="645.5" y="271.6" font-size="6.5" text-anchor="middle" fill="#333">1</text>
<text x="683.0" y="241.6" font-size="6.5" text-anchor="middle" fill="#333">4</text>
<rect x="317.2" y="394.3" width="159.0" height="73.09999999999997" fill="none" stroke="#333" stroke-width="0.9"/>
<text x="396.7" y="390.6" font-size="9.6" text-anchor="middle" fill="#444">Scale-Location</text>
<line x1="312.7" y1="401.5" x2="317.2" y2="401.5" stroke="#222" stroke-width="0.8"/>
<text x="306.59999999999997" y="401.5" font-size="7.2" text-anchor="middle" fill="#333" transform="rotate(-90 306.59999999999997 401.5)">4</text>
<line x1="312.7" y1="417.5" x2="317.2" y2="417.5" stroke="#222" stroke-width="0.8"/>
<text x="306.59999999999997" y="417.5" font-size="7.2" text-anchor="middle" fill="#333" transform="rotate(-90 306.59999999999997 417.5)">3</text>
<line x1="312.7" y1="433.5" x2="317.2" y2="433.5" stroke="#222" stroke-width="0.8"/>
<text x="306.59999999999997" y="433.5" font-size="7.2" text-anchor="middle" fill="#333" transform="rotate(-90 306.59999999999997 433.5)">2</text>
<line x1="312.7" y1="449.5" x2="317.2" y2="449.5" stroke="#222" stroke-width="0.8"/>
<text x="306.59999999999997" y="449.5" font-size="7.2" text-anchor="middle" fill="#333" transform="rotate(-90 306.59999999999997 449.5)">1</text>
<line x1="312.7" y1="465.5" x2="317.2" y2="465.5" stroke="#222" stroke-width="0.8"/>
<text x="306.59999999999997" y="465.5" font-size="7.2" text-anchor="middle" fill="#333" transform="rotate(-90 306.59999999999997 465.5)">0</text>
<line x1="351.9" y1="467.4" x2="351.9" y2="471.9" stroke="#222" stroke-width="0.8"/>
<text x="351.9" y="485.0" font-size="7.2" text-anchor="middle" fill="#333">0.2</text>
<line x1="388.6" y1="467.4" x2="388.6" y2="471.9" stroke="#222" stroke-width="0.8"/>
<text x="388.6" y="485.0" font-size="7.2" text-anchor="middle" fill="#333">0.3</text>
<line x1="425.2" y1="467.4" x2="425.2" y2="471.9" stroke="#222" stroke-width="0.8"/>
<text x="425.2" y="485.0" font-size="7.2" text-anchor="middle" fill="#333">0.4</text>
<line x1="461.9" y1="467.4" x2="461.9" y2="471.9" stroke="#222" stroke-width="0.8"/>
<text x="461.9" y="485.0" font-size="7.2" text-anchor="middle" fill="#333">0.5</text>
<text x="396.7" y="504.6" font-size="7.9" text-anchor="middle" fill="#333">Predicted values</text>
<text x="287.0" y="430.8" font-size="7.2" text-anchor="middle" fill="#333" transform="rotate(-90 287.0 430.8)">√|Std. deviance resid.|</text>
<line x1="323" y1="446.8" x2="470.5" y2="397.8" stroke="#f04040" stroke-width="1.0"/>
<circle cx="323" cy="442.5" r="2.05" fill="none" stroke="#333" stroke-width="0.8"/>
<circle cx="323" cy="446.8" r="2.05" fill="none" stroke="#333" stroke-width="0.8"/>
<circle cx="323" cy="451.6" r="2.05" fill="none" stroke="#333" stroke-width="0.8"/>
<circle cx="470.5" cy="442.5" r="2.05" fill="none" stroke="#333" stroke-width="0.8"/>
<circle cx="466" cy="397.8" r="2.05" fill="none" stroke="#333" stroke-width="0.8"/>
<circle cx="470.5" cy="397.8" r="2.05" fill="none" stroke="#333" stroke-width="0.8"/>
<circle cx="466" cy="400.6" r="2.05" fill="none" stroke="#333" stroke-width="0.8"/>
<circle cx="470.5" cy="400.6" r="2.05" fill="none" stroke="#333" stroke-width="0.8"/>
<text x="328.5" y="445.0" font-size="6.5" text-anchor="middle" fill="#333">1</text>
<text x="466.0" y="400.3" font-size="6.5" text-anchor="middle" fill="#333">4</text>
<rect x="535.7" y="394.3" width="159.0" height="73.69999999999999" fill="none" stroke="#333" stroke-width="0.9"/>
<text x="614.9" y="390.6" font-size="9.6" text-anchor="middle" fill="#444">Residuals vs Leverage</text>
<line x1="531.2" y1="403.0" x2="535.7" y2="403.0" stroke="#222" stroke-width="0.8"/>
<text x="525.1" y="403.0" font-size="7.2" text-anchor="middle" fill="#333" transform="rotate(-90 525.1 403.0)">2</text>
<line x1="531.2" y1="418.2" x2="535.7" y2="418.2" stroke="#222" stroke-width="0.8"/>
<text x="525.1" y="418.2" font-size="7.2" text-anchor="middle" fill="#333" transform="rotate(-90 525.1 418.2)">1</text>
<line x1="531.2" y1="433.3" x2="535.7" y2="433.3" stroke="#222" stroke-width="0.8"/>
<text x="525.1" y="433.3" font-size="7.2" text-anchor="middle" fill="#333" transform="rotate(-90 525.1 433.3)">0</text>
<line x1="531.2" y1="448.5" x2="535.7" y2="448.5" stroke="#222" stroke-width="0.8"/>
<text x="525.1" y="448.5" font-size="7.2" text-anchor="middle" fill="#333" transform="rotate(-90 525.1 448.5)">-1</text>
<line x1="531.2" y1="463.7" x2="535.7" y2="463.7" stroke="#222" stroke-width="0.8"/>
<text x="525.1" y="463.7" font-size="7.2" text-anchor="middle" fill="#333" transform="rotate(-90 525.1 463.7)">-2</text>
<line x1="541.4" y1="468" x2="541.4" y2="472.5" stroke="#222" stroke-width="0.8"/>
<text x="541.4" y="485.6" font-size="7.2" text-anchor="middle" fill="#333">0.0</text>
<line x1="581.8" y1="468" x2="581.8" y2="472.5" stroke="#222" stroke-width="0.8"/>
<text x="581.8" y="485.6" font-size="7.2" text-anchor="middle" fill="#333">0.1</text>
<line x1="622.1" y1="468" x2="622.1" y2="472.5" stroke="#222" stroke-width="0.8"/>
<text x="622.1" y="485.6" font-size="7.2" text-anchor="middle" fill="#333">0.2</text>
<line x1="662.5" y1="468" x2="662.5" y2="472.5" stroke="#222" stroke-width="0.8"/>
<text x="662.5" y="485.6" font-size="7.2" text-anchor="middle" fill="#333">0.3</text>
<text x="614.9" y="505.2" font-size="7.9" text-anchor="middle" fill="#333">Leverage</text>
<text x="505.0" y="431.0" font-size="7.9" text-anchor="middle" fill="#333" transform="rotate(-90 505.0 431.0)">Std. Pearson resid.</text>
<line x1="541.4" y1="394.3" x2="541.4" y2="468" stroke="#aaa" stroke-width="0.7" stroke-dasharray="1 1.5"/>
<line x1="535.7" y1="433.3" x2="694.7" y2="433.3" stroke="#aaa" stroke-width="0.7" stroke-dasharray="1 1.5"/>
<g clip-path="url(#c4)">
<polyline points="573.7,381.9 575.7,383.6 577.7,385.1 579.7,386.5 581.8,387.9 583.8,389.1 585.8,390.2 587.8,391.3 589.8,392.3 591.9,393.2 593.9,394.1 595.9,395.0 597.9,395.8 599.9,396.5 601.9,397.2 604.0,397.9 606.0,398.6 608.0,399.2 610.0,399.8 612.0,400.4 614.0,401.0 616.1,401.5 618.1,402.0 620.1,402.5 622.1,403.0 624.1,403.5 626.2,403.9 628.2,404.4 630.2,404.8 632.2,405.2 634.2,405.6 636.2,406.0 638.3,406.3 640.3,406.7 642.3,407.1 644.3,407.4 646.3,407.7 648.4,408.1 650.4,408.4 652.4,408.7 654.4,409.0 656.4,409.3 658.4,409.6 660.5,409.9 662.5,410.2 664.5,410.4 666.5,410.7 668.5,411.0 670.6,411.2 672.6,411.5 674.6,411.7 676.6,412.0 678.6,412.2 680.6,412.4 682.7,412.7 684.7,412.9 686.7,413.1 688.7,413.3 690.7,413.5 692.8,413.7 694.8,413.9" fill="none" stroke="#f03a3a" stroke-width="0.9" stroke-dasharray="3 2"/>
<polyline points="573.7,484.7 575.7,483.0 577.7,481.5 579.7,480.1 581.8,478.8 583.8,477.5 585.8,476.4 587.8,475.3 589.8,474.3 591.9,473.4 593.9,472.5 595.9,471.6 597.9,470.8 599.9,470.1 601.9,469.4 604.0,468.7 606.0,468.0 608.0,467.4 610.0,466.8 612.0,466.2 614.0,465.6 616.1,465.1 618.1,464.6 620.1,464.1 622.1,463.6 624.1,463.1 626.2,462.7 628.2,462.2 630.2,461.8 632.2,461.4 634.2,461.0 636.2,460.6 638.3,460.3 640.3,459.9 642.3,459.5 644.3,459.2 646.3,458.9 648.4,458.5 650.4,458.2 652.4,457.9 654.4,457.6 656.4,457.3 658.4,457.0 660.5,456.7 662.5,456.4 664.5,456.2 666.5,455.9 668.5,455.6 670.6,455.4 672.6,455.1 674.6,454.9 676.6,454.6 678.6,454.4 680.6,454.2 682.7,453.9 684.7,453.7 686.7,453.5 688.7,453.3 690.7,453.1 692.8,452.9 694.8,452.7" fill="none" stroke="#f03a3a" stroke-width="0.9" stroke-dasharray="3 2"/>
<polyline points="573.7,360.6 575.7,363.0 577.7,365.2 579.7,367.2 581.8,369.0 583.8,370.7 585.8,372.4 587.8,373.9 589.8,375.3 591.9,376.6 593.9,377.9 595.9,379.1 597.9,380.2 599.9,381.3 601.9,382.3 604.0,383.3 606.0,384.2 608.0,385.1 610.0,386.0 612.0,386.8 614.0,387.6 616.1,388.3 618.1,389.1 620.1,389.8 622.1,390.4 624.1,391.1 626.2,391.7 628.2,392.4 630.2,393.0 632.2,393.5 634.2,394.1 636.2,394.6 638.3,395.2 640.3,395.7 642.3,396.2 644.3,396.7 646.3,397.2 648.4,397.6 650.4,398.1 652.4,398.5 654.4,398.9 656.4,399.4 658.4,399.8 660.5,400.2 662.5,400.6 664.5,401.0 666.5,401.3 668.5,401.7 670.6,402.1 672.6,402.4 674.6,402.8 676.6,403.1 678.6,403.4 680.6,403.8 682.7,404.1 684.7,404.4 686.7,404.7 688.7,405.0 690.7,405.3 692.8,405.6 694.8,405.9" fill="none" stroke="#f03a3a" stroke-width="0.9" stroke-dasharray="3 2"/>
<polyline points="573.7,506.0 575.7,503.6 577.7,501.4 579.7,499.4 581.8,497.6 583.8,495.9 585.8,494.2 587.8,492.7 589.8,491.3 591.9,490.0 593.9,488.7 595.9,487.5 597.9,486.4 599.9,485.3 601.9,484.3 604.0,483.3 606.0,482.4 608.0,481.5 610.0,480.6 612.0,479.8 614.0,479.0 616.1,478.3 618.1,477.5 620.1,476.8 622.1,476.2 624.1,475.5 626.2,474.9 628.2,474.2 630.2,473.6 632.2,473.1 634.2,472.5 636.2,472.0 638.3,471.4 640.3,470.9 642.3,470.4 644.3,469.9 646.3,469.4 648.4,469.0 650.4,468.5 652.4,468.1 654.4,467.7 656.4,467.2 658.4,466.8 660.5,466.4 662.5,466.0 664.5,465.6 666.5,465.3 668.5,464.9 670.6,464.5 672.6,464.2 674.6,463.8 676.6,463.5 678.6,463.2 680.6,462.8 682.7,462.5 684.7,462.2 686.7,461.9 688.7,461.6 690.7,461.3 692.8,461.0 694.8,460.7" fill="none" stroke="#f03a3a" stroke-width="0.9" stroke-dasharray="3 2"/>
</g>
<polyline points="666,402 670.3,433.5 674.6,431.5 677.5,440 688.9,460.8" fill="none" stroke="#f03a3a" stroke-width="0.9"/>
<circle cx="666" cy="402" r="2.05" fill="none" stroke="#333" stroke-width="0.8"/>
<circle cx="670.3" cy="435.3" r="2.05" fill="none" stroke="#333" stroke-width="0.8"/>
<circle cx="674.6" cy="430.4" r="2.05" fill="none" stroke="#333" stroke-width="0.8"/>
<circle cx="673.2" cy="437.3" r="2.05" fill="none" stroke="#333" stroke-width="0.8"/>
<circle cx="677.5" cy="439.6" r="2.05" fill="none" stroke="#333" stroke-width="0.8"/>
<circle cx="682" cy="435" r="2.05" fill="none" stroke="#333" stroke-width="0.8"/>
<circle cx="684" cy="464" r="2.05" fill="none" stroke="#333" stroke-width="0.8"/>
<circle cx="688.9" cy="460.8" r="2.05" fill="none" stroke="#333" stroke-width="0.8"/>
<text x="671.5" y="404.5" font-size="6.5" text-anchor="middle" fill="#333">4</text>
<text x="680.5" y="442.2" font-size="6.5" text-anchor="middle" fill="#333">5</text>
<line x1="543.7" y1="449.6" x2="561.5" y2="449.6" stroke="#f03a3a" stroke-width="0.9" stroke-dasharray="3 2"/>
<text x="568.5" y="452.3" font-size="7.7" text-anchor="start" fill="#333">Cook's distance</text>
<text x="697.5" y="408.5" font-size="6.2" text-anchor="start" fill="#f03a3a">1</text>
<text x="697.5" y="416.5" font-size="6.2" text-anchor="start" fill="#f03a3a">0.5</text>
<text x="697.5" y="455.3" font-size="6.2" text-anchor="start" fill="#f03a3a">0.5</text>
<text x="697.5" y="463.3" font-size="6.2" text-anchor="start" fill="#f03a3a">1</text>
<text x="496.2" y="191.6" font-size="12.4" text-anchor="middle" fill="#222">glm(y ~ g)</text>
</svg>

<div style="left:0px;top:521.5px;width:721px;height:1px;background:#b4b4b4;"></div>
<div style="left:0px;top:522.5px;width:721px;height:1px;background:#e6e6e6;"></div>
<div style="left:0px;top:523.5px;width:721px;height:1.2px;background:#a4a4a4;"></div>
</body></html>
